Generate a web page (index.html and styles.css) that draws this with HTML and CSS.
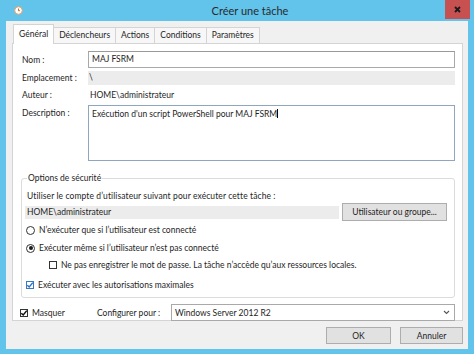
FILE: index.html
```html
<!DOCTYPE html>
<html lang="fr">
<head>
    <meta charset="UTF-8">
    <title>Créer une tâche</title>
    <link rel="stylesheet" href="styles.css">
</head>
<body>
    <div class="window">
        <div class="titlebar">
            <svg class="app-icon" width="9" height="9" viewBox="0 0 9 9">
                <circle cx="4.5" cy="4.5" r="3.8" fill="#fff" stroke="#e8a060" stroke-width="1"/>
                <path d="M4.5 2.5 V4.7 H6" fill="none" stroke="#c06020" stroke-width="0.9"/>
            </svg>
            <div class="title">Créer une tâche</div>
            <div class="close">
                <svg width="7" height="7" viewBox="0 0 7 7">
                    <path d="M1 1 L6 6 M6 1 L1 6" stroke="#1a1a1a" stroke-width="1.8"/>
                </svg>
            </div>
        </div>
        <div class="client">
            <div class="tabs">
                <div class="tab active">Général</div>
                <div class="tab">Déclencheurs</div>
                <div class="tab">Actions</div>
                <div class="tab">Conditions</div>
                <div class="tab">Paramètres</div>
            </div>
            <div class="panel">
                <div class="fields">
                    <label class="lbl">Nom :</label>
                    <div class="input">MAJ FSRM</div>
                    <label class="lbl">Emplacement :</label>
                    <div class="readonly">\</div>
                    <label class="lbl">Auteur :</label>
                    <div class="plain">HOME\administrateur</div>
                    <label class="lbl lbl-top">Description :</label>
                    <div class="textarea">Exécution d'un script PowerShell pour MAJ FSRM<span class="caret"></span></div>
                </div>

                <fieldset class="group">
                    <legend>Options de sécurité</legend>
                    <div class="group-text">Utiliser le compte d’utilisateur suivant pour exécuter cette tâche :</div>
                    <div class="account-row">
                        <div class="account">HOME\administrateur</div>
                        <button class="btn btn-user">Utilisateur ou groupe...</button>
                    </div>
                    <div class="option opt-1"><span class="radio"></span>N’exécuter que si l’utilisateur est connecté</div>
                    <div class="option opt-2"><span class="radio checked"></span>Exécuter même si l’utilisateur n’est pas connecté</div>
                    <div class="option opt-3 indent"><span class="check"></span>Ne pas enregistrer le mot de passe. La tâche n’accède qu’aux ressources locales.</div>
                    <div class="option opt-4">
                        <span class="check on-blue">
                            <svg width="8" height="8" viewBox="0 0 8 8"><path d="M1.3 4.2 L3.2 6 L6.8 1.6" fill="none" stroke="#2a70c8" stroke-width="1.4"/></svg>
                        </span>Exécuter avec les autorisations maximales
                    </div>
                </fieldset>

                <div class="bottom-row">
                    <div class="option hide-opt">
                        <span class="check on-black">
                            <svg width="8" height="8" viewBox="0 0 8 8"><path d="M1.3 4.2 L3.2 6 L6.8 1.6" fill="none" stroke="#111" stroke-width="1.5"/></svg>
                        </span>Masquer
                    </div>
                    <span class="config-lbl">Configurer pour :</span>
                    <div class="select">
                        <span>Windows Server 2012 R2</span>
                        <svg width="7" height="5" viewBox="0 0 7 5"><path d="M1 1 L3.5 3.5 L6 1" fill="none" stroke="#555" stroke-width="1.1"/></svg>
                    </div>
                </div>
            </div>
            <div class="actions">
                <button class="btn btn-ok">OK</button>
                <button class="btn btn-cancel">Annuler</button>
            </div>
        </div>
    </div>
</body>
</html>
```

FILE: styles.css
```css
* { box-sizing: border-box; }
body {
    margin: 0;
    background: #62c4ea;
    font-family: Lato, "Open Sans", sans-serif;
    font-size: 8.5px;
    color: #1e1e1e;
}
.window { width: 474px; height: 354px; }

/* barre de titre */
.titlebar {
    height: 21px;
    display: flex;
    align-items: center;
    padding-left: 14px;
}
.app-icon { flex: none; }
.title {
    flex: 1;
    text-align: center;
    font-size: 11px;
    color: #2a2a2a;
    padding-left: 32px;
    padding-bottom: 1px;
}
.close {
    align-self: flex-start;
    width: 25px;
    height: 19px;
    margin-right: 4px;
    background: #c75050;
    display: flex;
    align-items: center;
    justify-content: center;
}

.client {
    margin: 0 6px 0 6px;
    height: 328px;
    background: #f0f0f0;
    padding: 3px 5px 0 6px;
}

/* onglets */
.tabs {
    display: flex;
    align-items: flex-end;
    height: 19px;
    padding-left: 1px;
}
.tab {
    height: 16px;
    line-height: 15px;
    padding: 0 5px;
    background: #f7f7f7;
    border: 1px solid #d4d4d4;
    border-bottom: none;
    margin-left: -1px;
}
.tab:first-child { margin-left: 0; }
.tab.active {
    line-height: 18px;
    background: #fff;
    position: relative;
    z-index: 1;
    margin-bottom: -1px;
    height: 20px;
}

.panel {
    height: 278px;
    background: #fff;
    border: 1px solid #d4d4d4;
    padding: 7px 7px 0 9px;
}

.fields {
    display: grid;
    grid-template-columns: 66px 1fr;
    grid-template-rows: 17px 14px 14px 56px;
    row-gap: 3px;
}
.lbl { display: flex; align-items: center; }
.lbl-top { align-items: flex-start; padding-top: 3px; }
.input {
    border: 1px solid #a9a9a9;
    border-top-color: #9a9a9a;
    padding: 0 3px;
    line-height: 15px;
}
.readonly {
    background: #ececec;
    line-height: 13px;
    padding-left: 1px;
}
.plain { line-height: 14px; padding-left: 2px; }
.textarea {
    border: 1px solid #8ea7bf;
    padding: 3px 3px;
    line-height: 11px;
}
.caret {
    display: inline-block;
    width: 1px;
    height: 9px;
    background: #000;
    vertical-align: -1px;
}

/* options de sécurité */
.group {
    margin: 12px 0 0 -1px;
    padding: 0 6px 6px 5px;
    border: 1px solid #dcdcdc;
    border-radius: 3px;
}
.group legend {
    padding: 0 1px;
    line-height: 11px;
}
.group-text { margin-top: 6px; line-height: 12px; letter-spacing: 0.1px; }
.account-row {
    display: flex;
    align-items: center;
    margin-top: 1px;
    margin-left: -2px;
}
.account {
    width: 314px;
    height: 13px;
    line-height: 13px;
    background: #ececec;
    padding-left: 2px;
}
.btn {
    font: inherit;
    color: #1e1e1e;
    background: #e1e1e1;
    border: 1px solid #adadad;
    padding: 0;
}
.btn-user {
    margin-left: 3px;
    width: 105px;
    height: 18px;
}

.option {
    display: flex;
    align-items: center;
    height: 12px;
}
.opt-1 { margin-top: 3px; }
.opt-2 { margin-top: 6px; }
.opt-3 { margin-top: 5px; }
.opt-4 { margin-top: 8px; }
.indent { padding-left: 22px; }

.radio {
    width: 9px;
    height: 9px;
    border: 1px solid #333;
    border-radius: 50%;
    margin: 0 4px 0 -1px;
    display: flex;
    align-items: center;
    justify-content: center;
    background: #fff;
}
.radio.checked::after {
    content: "";
    width: 4px;
    height: 4px;
    border-radius: 50%;
    background: #1a1a1a;
}
.check {
    width: 8px;
    height: 8px;
    border: 1px solid #333;
    margin-right: 4px;
    display: flex;
    align-items: center;
    justify-content: center;
    background: #fff;
}
.check svg { flex: none; }
.check.on-blue { border-color: #3a78c0; margin-left: -1px; }

/* ligne du bas */
.bottom-row {
    display: flex;
    align-items: center;
    margin-top: 6px;
    height: 17px;
}
.hide-opt { margin-left: -2px; width: 77px; }
.config-lbl { width: 74px; }
.select {
    flex: 1;
    height: 17px;
    border: 1px solid #a9a9a9;
    display: flex;
    align-items: center;
    justify-content: space-between;
    padding: 0 4px 0 3px;
}

.actions {
    display: flex;
    justify-content: flex-end;
    gap: 9px;
    margin-top: 6px;
}
.btn-ok { width: 65px; height: 17px; }
.btn-cancel { width: 63px; height: 17px; }
```
